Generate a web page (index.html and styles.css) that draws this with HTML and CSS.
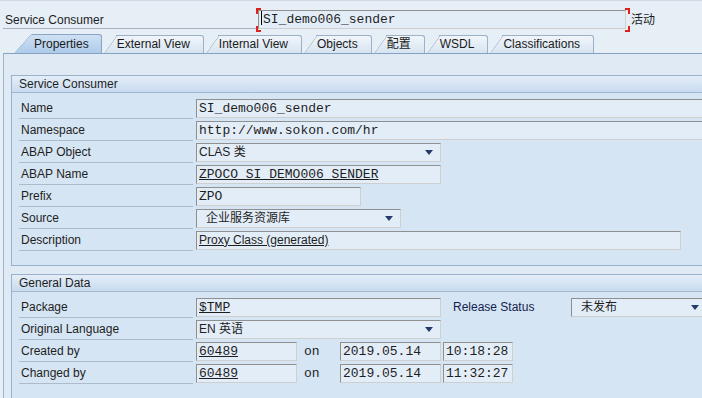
FILE: index.html
```html
<!DOCTYPE html>
<html lang="en">
<head>
    <meta charset="UTF-8">
    <meta name="viewport" content="width=device-width, initial-scale=1.0">
    <title>Service Consumer</title>
    <link rel="stylesheet" href="styles.css">
</head>
<body>

<div class="topbar">
    <div class="top-label">Service Consumer</div>
    <div class="focus">
        <div class="field mono top-input"><span class="caret"></span>SI_demo006_sender</div>
    </div>
    <div class="status">活动</div>
</div>

<div class="tabs">
    <div class="tab active"><span>Properties</span></div>
    <div class="tab"><span>External View</span></div>
    <div class="tab"><span>Internal View</span></div>
    <div class="tab"><span>Objects</span></div>
    <div class="tab"><span>配置</span></div>
    <div class="tab"><span>WSDL</span></div>
    <div class="tab"><span>Classifications</span></div>
</div>

<div class="panel">
    <div class="group">
        <div class="group-title">Service Consumer</div>
        <div class="group-body">
            <div class="row">
                <div class="label">Name</div>
                <div class="field mono w-full">SI_demo006_sender</div>
            </div>
            <div class="row">
                <div class="label">Namespace</div>
                <div class="field mono w-full">http://www.sokon.com/hr</div>
            </div>
            <div class="row">
                <div class="label">ABAP Object</div>
                <div class="field select w-245">CLAS 类</div>
            </div>
            <div class="row">
                <div class="label">ABAP Name</div>
                <div class="field mono link w-245">ZPOCO_SI_DEMO006_SENDER</div>
            </div>
            <div class="row">
                <div class="label">Prefix</div>
                <div class="field mono w-165">ZPO</div>
            </div>
            <div class="row">
                <div class="label">Source</div>
                <div class="field select indent w-205">企业服务资源库</div>
            </div>
            <div class="row">
                <div class="label">Description</div>
                <div class="field link w-485">Proxy Class (generated)</div>
            </div>
        </div>
    </div>

    <div class="group">
        <div class="group-title">General Data</div>
        <div class="group-body">
            <div class="row">
                <div class="label">Package</div>
                <div class="field mono link w-245">$TMP</div>
                <div class="side-label">Release Status</div>
                <div class="field select indent w-136">未发布</div>
            </div>
            <div class="row">
                <div class="label">Original Language</div>
                <div class="field select w-245">EN 英语</div>
            </div>
            <div class="row">
                <div class="label">Created by</div>
                <div class="field mono link w-101">60489</div>
                <div class="on mono">on</div>
                <div class="field mono w-101">2019.05.14</div>
                <div class="field mono w-70">10:18:28</div>
            </div>
            <div class="row">
                <div class="label">Changed by</div>
                <div class="field mono link w-101">60489</div>
                <div class="on mono">on</div>
                <div class="field mono w-101">2019.05.14</div>
                <div class="field mono w-70">11:32:27</div>
            </div>
        </div>
    </div>
</div>

</body>
</html>
```

FILE: styles.css
```css
body { margin: 0; width: 702px; height: 398px; overflow: hidden; background-color: #e6eef6; font-family: "Liberation Sans", "Noto Sans CJK SC", sans-serif; font-size: 12px; color: #1e1e1e; }
.mono { font-family: "Liberation Mono", "Noto Sans CJK SC", monospace; font-size: 13px; }

.topbar { display: flex; align-items: flex-start; padding: 9px 0 0 3px; height: 22px; border-top: 1px solid #d0d9e3; }
.top-label { width: 251px; height: 18px; line-height: 20px; padding-left: 2px; border-bottom: 1px solid #a9b2bc; }
.focus { position: relative; margin-left: 2px; }
.focus::before, .focus::after { content: ""; position: absolute; top: -2px; width: 5px; height: 24px; --red: linear-gradient(#e0201c, #e0201c); }
.focus::before { left: -2px; background: var(--red) top left / 5px 2px no-repeat, var(--red) top left / 2px 6px no-repeat, var(--red) bottom left / 5px 2px no-repeat, var(--red) bottom left / 2px 6px no-repeat; }
.focus::after { right: -2px; background: var(--red) top right / 5px 2px no-repeat, var(--red) top right / 2px 6px no-repeat, var(--red) bottom right / 5px 2px no-repeat, var(--red) bottom right / 2px 6px no-repeat; }
.top-input { width: 368px; height: 20px; line-height: 18px; }
.caret { display: inline-block; width: 1px; height: 14px; background: #000; vertical-align: -2px; margin-right: 1px; }
.status { margin-left: 3px; line-height: 20px; font-size: 12px; }

.tabs { display: flex; align-items: flex-end; height: 21px; padding-left: 37px; }
.tab { position: relative; height: 17px; line-height: 17px; padding: 0 13px 0 1px; margin-left: 12px; margin-right: 2px; border: 1px solid #9bb1c9; border-left: none; border-bottom: none; border-radius: 0 3px 0 0; background: linear-gradient(#f1f5fa, #d7e4f1); color: #1a1a1a; }
.tab::before { content: ""; position: absolute; left: -12px; top: -1px; bottom: 0; width: 16px; border-top: 1px solid #9bb1c9; border-left: 1px solid #9bb1c9; border-radius: 2px 0 0 0; background: linear-gradient(#f1f5fa, #d7e4f1); transform: skewX(-36deg); transform-origin: bottom left; }
.tab span { position: relative; }
.tab.active { height: 18px; line-height: 19px; margin-left: -5px; padding: 0 12px 0 2px; background: linear-gradient(#cfe0f3, #aecbea); border-color: #8aa5c4; }
.tab.active::before { left: -18px; width: 22px; background: linear-gradient(#cfe0f3, #aecbea); border-color: #8aa5c4; transform: skewX(-42deg); }

.panel { margin-left: 3px; padding: 21px 0 0 7px; border-top: 1px solid #86a2c2; border-left: 1px solid #9fb4cb; background-color: #e0eaf5; }
.group { width: 720px; margin-bottom: 8px; border: 1px solid #9ab1cb; background-color: #d6e5f3; }
.group-title { height: 16px; line-height: 17px; padding-left: 7px; background: linear-gradient(#e4eef8, #c8dbef); border-bottom: 1px solid #a2b8d1; }
.group-body { padding: 4px 0 14px 7px; }

.row { display: flex; align-items: center; height: 22px; }
.label { width: 172px; height: 21px; line-height: 22px; padding-left: 2px; border-bottom: 1px solid #aebbc8; margin-right: 3px; }
.side-label { width: 118px; margin-left: 10px; color: #14224e; }

.field { box-sizing: border-box; height: 19px; line-height: 17px; padding: 0 2px; margin-right: 2px; border: 1px solid; border-color: #8f8f8f #cfcfcf #cfcfcf #8f8f8f; background-color: #e3edf8; white-space: nowrap; overflow: hidden; }
.link { text-decoration: underline; }
.indent { padding-left: 9px; }
.select { position: relative; }
.select::after { content: ""; position: absolute; right: 7px; top: 6px; width: 0; height: 0; border-left: 4px solid transparent; border-right: 4px solid transparent; border-top: 5px solid #253a6c; }
.on { width: 36px; padding-left: 5px; }

.w-full { width: 520px; }
.w-485 { width: 485px; }
.w-245 { width: 245px; }
.w-205 { width: 205px; }
.w-165 { width: 165px; }
.w-136 { width: 136px; }
.w-101 { width: 101px; }
.w-70 { width: 70px; }
```
